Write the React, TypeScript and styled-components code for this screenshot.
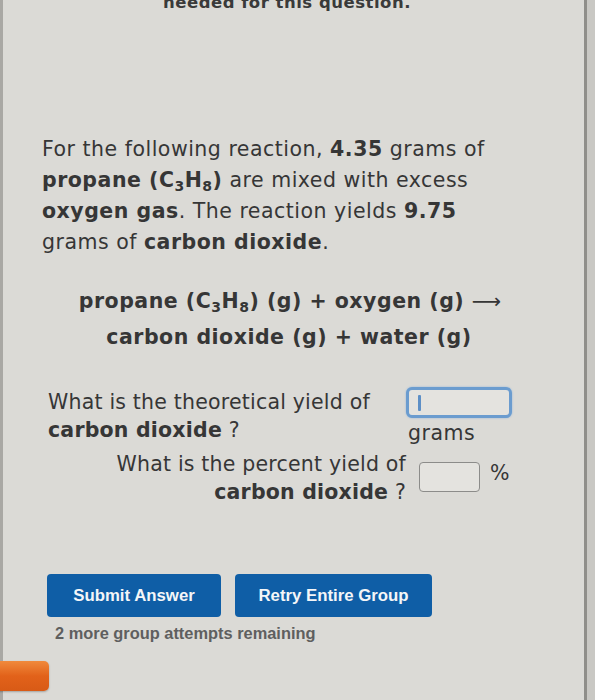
import React, { FC } from 'react';
import styled, { createGlobalStyle } from 'styled-components';

const GlobalStyle = createGlobalStyle`
  html, body {
    margin: 0;
    padding: 0;
    background: #cfcfcb;
  }
  body {
    font-family: "DejaVu Sans", Verdana, sans-serif;
    color: #363636;
  }
`;

const Page = styled.div`
  display: flex;
  width: 595px;
  height: 700px;
  overflow: hidden;
`;

const Panel = styled.div`
  width: 587px;
  height: 700px;
  background: #dbdad6;
  border-left: 3px solid #a9a8a4;
  border-right: 3px solid #8f8e8a;
  display: flex;
  flex-direction: column;
  box-sizing: border-box;
  letter-spacing: 0.5px;
`;

const Gutter = styled.div`
  flex: 1;
  background: #c9c8c4;
`;

const TopNote = styled.div`
  margin-top: -7px;
  padding-left: 160px;
  font-size: 16.5px;
  font-weight: bold;
  color: #3a3a3a;
  line-height: 20px;
  letter-spacing: 0.5px;
`;

const Problem = styled.p`
  margin: 121px 0 0 39px;
  width: 480px;
  font-size: 20.5px;
  line-height: 31px;
`;

const Sub = styled.sub`
  font-size: 14px;
  line-height: 0;
  vertical-align: -4px;
`;

const Equation = styled.div`
  margin: 25px 0 0 36px;
  width: 500px;
  text-align: center;
  font-size: 20.5px;
  font-weight: bold;
  line-height: 36px;
`;

const Arrow = styled.span`
  font-weight: normal;
  letter-spacing: -2px;
`;

const QuestionRow = styled.div<{ $top: number; $left: number }>`
  display: flex;
  align-items: flex-start;
  margin: ${(p) => p.$top}px 0 0 ${(p) => p.$left}px;
`;

const QuestionText = styled.div<{ $width: number; $align: string }>`
  width: ${(p) => p.$width}px;
  text-align: ${(p) => p.$align};
  font-size: 20.5px;
  line-height: 28px;
  letter-spacing: 0.2px;
  white-space: nowrap;
`;

const InputColumn = styled.div<{ $gap: number; $top: number }>`
  display: flex;
  flex-direction: column;
  margin: ${(p) => p.$top}px 0 0 ${(p) => p.$gap}px;
`;

const AnswerBox = styled.div<{ $width: number; $height: number; $focused?: boolean }>`
  width: ${(p) => p.$width}px;
  height: ${(p) => p.$height}px;
  box-sizing: border-box;
  background: #e4e3df;
  border: ${(p) => (p.$focused ? '3px solid #6b9ccf' : '1.5px solid #8c8c8a')};
  border-radius: ${(p) => (p.$focused ? '6px' : '4px')};
  box-shadow: ${(p) => (p.$focused ? '0 0 2px #8fb4dc' : 'none')};
  display: flex;
  align-items: center;
  padding-left: 9px;
`;

const Caret = styled.span`
  width: 3px;
  height: 16px;
  background: #5d8fc6;
  border-radius: 1px;
`;

const Unit = styled.span<{ $top: number; $left: number }>`
  margin: ${(p) => p.$top}px 0 0 ${(p) => p.$left}px;
  font-size: 20.5px;
  line-height: 24px;
`;

const ButtonRow = styled.div`
  display: flex;
  gap: 14px;
  margin: 68px 0 0 44px;
`;

const ActionButton = styled.button<{ $width: number }>`
  width: ${(p) => p.$width}px;
  height: 43px;
  border: none;
  border-radius: 4px;
  background: #0f5ea6;
  color: #f4f6f8;
  font-family: "Liberation Sans", Arial, sans-serif;
  font-weight: bold;
  font-size: 16.8px;
  letter-spacing: 0;
  cursor: pointer;
`;

const Attempts = styled.div`
  margin: 6px 0 0 52px;
  font-family: "Liberation Sans", Arial, sans-serif;
  font-weight: bold;
  font-size: 16.4px;
  color: #5f5f5f;
  line-height: 20px;
  letter-spacing: 0;
`;

const OrangeTab = styled.div`
  margin: 18px 0 0 -10px;
  width: 56px;
  height: 30px;
  border-radius: 5px;
  background: linear-gradient(#f08a3c, #e2621a 50%, #d85a16);
  box-shadow: 0 1px 2px rgba(0, 0, 0, 0.25);
`;

const Formula: FC = () => (
  <>
    (C<Sub>3</Sub>H<Sub>8</Sub>)
  </>
);

const App: FC = () => (
  <Page>
    <GlobalStyle />
    <Panel>
      <TopNote>needed for this question.</TopNote>
      <Problem>
        For the following reaction, <b>4.35</b> grams of
        <br />
        <b>propane <Formula /></b> are mixed with excess
        <br />
        <b>oxygen gas</b>. The reaction yields <b>9.75</b>
        <br />
        grams of <b>carbon dioxide</b>.
      </Problem>
      <Equation>
        propane <Formula /> (g) + oxygen (g) <Arrow>⟶</Arrow>
        <br />
        carbon dioxide (g) + water (g)
      </Equation>
      <QuestionRow $top={33} $left={45}>
        <QuestionText $width={340} $align="left">
          What is the theoretical yield of
          <br />
          <b>carbon dioxide</b> ?
        </QuestionText>
        <InputColumn $gap={18} $top={-1}>
          <AnswerBox $width={106} $height={31} $focused>
            <Caret />
          </AnswerBox>
          <Unit $top={3} $left={2}>grams</Unit>
        </InputColumn>
      </QuestionRow>
      <QuestionRow $top={5} $left={90}>
        <QuestionText $width={313} $align="right">
          What is the percent yield of
          <br />
          <b>carbon dioxide</b> ?
        </QuestionText>
        <InputColumn $gap={13} $top={12}>
          <AnswerBox $width={61} $height={30} />
        </InputColumn>
        <Unit $top={11} $left={10}>%</Unit>
      </QuestionRow>
      <ButtonRow>
        <ActionButton type="button" $width={174}>Submit Answer</ActionButton>
        <ActionButton type="button" $width={197}>Retry Entire Group</ActionButton>
      </ButtonRow>
      <Attempts>2 more group attempts remaining</Attempts>
      <OrangeTab />
    </Panel>
    <Gutter />
  </Page>
);

export default App;
